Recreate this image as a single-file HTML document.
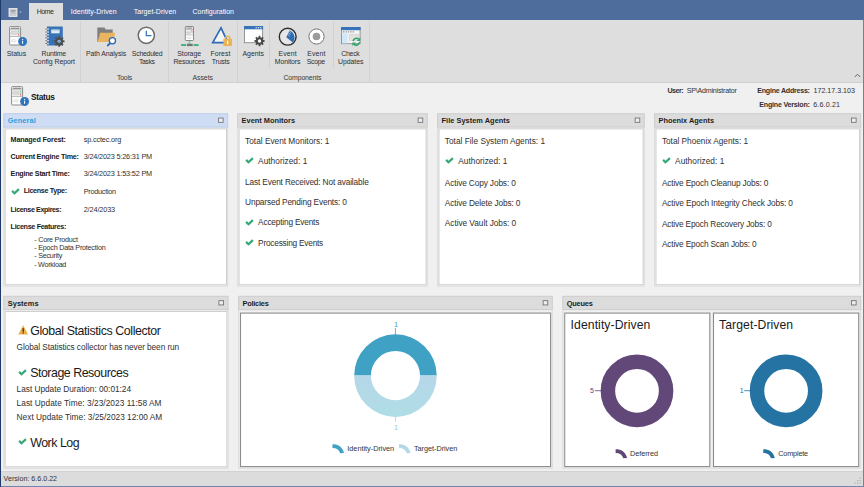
<!DOCTYPE html>
<html><head><meta charset="utf-8"><title>Status</title>
<style>
*{box-sizing:border-box;margin:0;padding:0}
html,body{width:864px;height:487px;overflow:hidden;background:#f0f0f0}
body{position:relative;font-family:"Liberation Sans",sans-serif;font-size:8px;color:#222}
.a{position:absolute}
.t{position:absolute;white-space:nowrap}
.sep{position:absolute;width:1px;background:#d1d1d1}
.ph{position:absolute;background:#dedede;border:1px solid #d3d3d3}
.ph.sel{background:#cedcf3;border-color:#c3d3ee}
.pf{position:absolute;background:#f0f0f0;border:1px solid #dadada;border-top:none}
.pb{position:absolute;background:#fff;border:1px solid #d0d0d0}
.pb.dk{border-color:#8e8e8e}
.mx{position:absolute;width:5.6px;height:5.3px;border:1px solid #72727a;background:#eef0f4}
</style></head><body>
<div class="a" style="left:0;top:0;width:864px;height:20px;background:#4e6d9d"></div>
<div class="a" style="left:1px;top:20px;width:863px;height:62px;background:#dedede"></div>
<div class="a" style="left:1px;top:82px;width:863px;height:1px;background:#d0d0d0"></div>
<div class="a" style="left:29px;top:3px;width:34px;height:18px;background:#dedede"></div>
<div class="a" style="left:1px;top:471px;width:863px;height:15px;background:#dcdcdc;border-top:1px solid #d2d2d2"></div>
<div class="a" style="left:0;top:486px;width:864px;height:1px;background:#6f87b0"></div>
<div class="a" style="left:0;top:0;width:1.3px;height:487px;background:#1d3a6b"></div>
<div class="a" style="left:862.800px;top:20px;width:1.200px;height:467px;background:#6583b1"></div>
<svg class="a" style="left:8px;top:8px" width="15" height="9" viewBox="0 0 15 9"><rect x="1" y="0.5" width="8" height="8" fill="#cfcfcf" stroke="#f2f2f2" stroke-width="0.8"/><rect x="2.800" y="2" width="4.600" height="1.600" fill="#8f98a8"/><rect x="2.800" y="4.500" width="4.600" height="0.800" fill="#aab"/><path d="M11.300 3.600h2.400l-1.200 1.500z" fill="#b9c6dc"/></svg>
<div class="t" style="left:36.70px;top:8.21px;font-size:7.0px;line-height:7px;letter-spacing:-0.524px;color:#2b2b2b;">Home</div>
<div class="t" style="left:70.80px;top:8.21px;font-size:7.0px;line-height:7px;letter-spacing:0.055px;color:#fff;">Identity-Driven</div>
<div class="t" style="left:133.80px;top:8.21px;font-size:7.0px;line-height:7px;letter-spacing:0.032px;color:#fff;">Target-Driven</div>
<div class="t" style="left:192.60px;top:8.21px;font-size:7.0px;line-height:7px;letter-spacing:-0.028px;color:#fff;">Configuration</div>
<div class="t" style="left:6.80px;top:49.87px;font-size:6.9px;line-height:7px;letter-spacing:-0.052px;color:#2e2e33;">Status</div>
<div class="t" style="left:41.60px;top:49.87px;font-size:6.9px;line-height:7px;letter-spacing:-0.182px;color:#2e2e33;">Runtime</div>
<div class="t" style="left:32.90px;top:57.87px;font-size:6.9px;line-height:7px;letter-spacing:-0.031px;color:#2e2e33;">Config Report</div>
<div class="t" style="left:86.00px;top:49.87px;font-size:6.9px;line-height:7px;letter-spacing:-0.102px;color:#2e2e33;">Path Analysis</div>
<div class="t" style="left:131.80px;top:49.87px;font-size:6.9px;line-height:7px;letter-spacing:-0.226px;color:#2e2e33;">Scheduled</div>
<div class="t" style="left:138.90px;top:57.87px;font-size:6.9px;line-height:7px;letter-spacing:-0.409px;color:#2e2e33;">Tasks</div>
<div class="t" style="left:177.30px;top:49.87px;font-size:6.9px;line-height:7px;letter-spacing:-0.078px;color:#2e2e33;">Storage</div>
<div class="t" style="left:173.50px;top:57.87px;font-size:6.9px;line-height:7px;letter-spacing:-0.185px;color:#2e2e33;">Resources</div>
<div class="t" style="left:210.50px;top:49.87px;font-size:6.9px;line-height:7px;letter-spacing:0.089px;color:#2e2e33;">Forest</div>
<div class="t" style="left:211.80px;top:57.87px;font-size:6.9px;line-height:7px;letter-spacing:-0.182px;color:#2e2e33;">Trusts</div>
<div class="t" style="left:242.50px;top:49.87px;font-size:6.9px;line-height:7px;letter-spacing:0.004px;color:#2e2e33;">Agents</div>
<div class="t" style="left:278.50px;top:49.87px;font-size:6.9px;line-height:7px;letter-spacing:0.164px;color:#2e2e33;">Event</div>
<div class="t" style="left:274.80px;top:57.87px;font-size:6.9px;line-height:7px;letter-spacing:-0.108px;color:#2e2e33;">Monitors</div>
<div class="t" style="left:307.30px;top:49.87px;font-size:6.9px;line-height:7px;letter-spacing:0.139px;color:#2e2e33;">Event</div>
<div class="t" style="left:306.80px;top:57.87px;font-size:6.9px;line-height:7px;letter-spacing:-0.341px;color:#2e2e33;">Scope</div>
<div class="t" style="left:341.30px;top:49.87px;font-size:6.9px;line-height:7px;letter-spacing:-0.264px;color:#2e2e33;">Check</div>
<div class="t" style="left:338.00px;top:57.87px;font-size:6.9px;line-height:7px;letter-spacing:-0.033px;color:#2e2e33;">Updates</div>
<div class="t" style="left:117.10px;top:73.77px;font-size:6.9px;line-height:7px;letter-spacing:-0.252px;color:#3a3a3a;">Tools</div>
<div class="t" style="left:192.50px;top:73.77px;font-size:6.9px;line-height:7px;letter-spacing:-0.041px;color:#3a3a3a;">Assets</div>
<div class="t" style="left:283.50px;top:73.77px;font-size:6.9px;line-height:7px;letter-spacing:-0.125px;color:#3a3a3a;">Components</div>
<div class="sep" style="left:80px;top:21px;height:61px"></div>
<div class="sep" style="left:168px;top:21px;height:61px"></div>
<div class="sep" style="left:237px;top:21px;height:61px"></div>
<div class="sep" style="left:369px;top:21px;height:61px"></div>
<div class="sep" style="left:269px;top:22px;height:46px"></div>
<div class="sep" style="left:333px;top:22px;height:46px"></div>
<svg class="a" style="left:854px;top:73px" width="7" height="5" viewBox="0 0 7 5"><path d="M0.800 4l2.700-2.800L6.200 4" fill="none" stroke="#666" stroke-width="1"/></svg>
<svg class="a" style="left:8.6px;top:25.6px" width="19" height="21" viewBox="0 0 19 21"><rect x="0.600" y="0.600" width="11" height="18.400" rx="0.800" fill="#fdfdfd" stroke="#8c8c8c" stroke-width="1"/><rect x="1.800" y="1.800" width="8.600" height="0.900" fill="#666"/><path d="M1 3.800h10.200M1 7.100h10.200M1 10.400h10.200" stroke="#a2a2a2" stroke-width="0.800"/><path d="M2 5.500h6.500M2 8.800h6.500" stroke="#cdcdcd" stroke-width="0.900"/><rect x="9.300" y="4.700" width="0.900" height="1.600" fill="#3cb878"/><rect x="9.300" y="8" width="0.900" height="1.600" fill="#e0412f"/><ellipse cx="4.800" cy="14.800" rx="2.600" ry="1" fill="none" stroke="#d8d8d8" stroke-width="0.800"/><circle cx="13.600" cy="15.500" r="4.450" fill="#2f74bd"/><rect x="13.100" y="14.700" width="1" height="3.100" fill="#fff"/><rect x="13.100" y="12.900" width="1" height="1.100" fill="#fff"/></svg>
<svg class="a" style="left:10.6px;top:85.6px" width="19" height="21" viewBox="0 0 19 21"><rect x="0.600" y="0.600" width="11" height="18.400" rx="0.800" fill="#fdfdfd" stroke="#8c8c8c" stroke-width="1"/><rect x="1.800" y="1.800" width="8.600" height="0.900" fill="#666"/><path d="M1 3.800h10.200M1 7.100h10.200M1 10.400h10.200" stroke="#a2a2a2" stroke-width="0.800"/><path d="M2 5.500h6.500M2 8.800h6.500" stroke="#cdcdcd" stroke-width="0.900"/><rect x="9.300" y="4.700" width="0.900" height="1.600" fill="#3cb878"/><rect x="9.300" y="8" width="0.900" height="1.600" fill="#e0412f"/><ellipse cx="4.800" cy="14.800" rx="2.600" ry="1" fill="none" stroke="#d8d8d8" stroke-width="0.800"/><circle cx="13.600" cy="15.500" r="4.450" fill="#2f74bd"/><rect x="13.100" y="14.700" width="1" height="3.100" fill="#fff"/><rect x="13.100" y="12.900" width="1" height="1.100" fill="#fff"/></svg>
<svg class="a" style="left:45.1px;top:26.1px" width="20" height="21" viewBox="0 0 20 21"><rect x="2" y="0.500" width="15.800" height="19" fill="#3873b8"/><rect x="0.300" y="2.6" width="3.200" height="1" rx="0.500" fill="#5a6a80"/><rect x="2.200" y="2.4" width="1.600" height="1.400" fill="#dfe9f5"/><rect x="0.300" y="5.5" width="3.200" height="1" rx="0.500" fill="#5a6a80"/><rect x="2.200" y="5.3" width="1.600" height="1.400" fill="#dfe9f5"/><rect x="0.300" y="8.4" width="3.200" height="1" rx="0.500" fill="#5a6a80"/><rect x="2.200" y="8.2" width="1.600" height="1.400" fill="#dfe9f5"/><rect x="0.300" y="11.3" width="3.200" height="1" rx="0.500" fill="#5a6a80"/><rect x="2.200" y="11.1" width="1.600" height="1.400" fill="#dfe9f5"/><rect x="0.300" y="14.2" width="3.200" height="1" rx="0.500" fill="#5a6a80"/><rect x="2.200" y="14.0" width="1.600" height="1.400" fill="#dfe9f5"/><rect x="0.300" y="17.1" width="3.200" height="1" rx="0.500" fill="#5a6a80"/><rect x="2.200" y="16.9" width="1.600" height="1.400" fill="#dfe9f5"/><rect x="6.200" y="3.500" width="8.400" height="3.800" fill="#e3edf8"/><rect x="6.800" y="4.100" width="7.200" height="1" fill="#bcd3ee"/><circle cx="14.100" cy="15.400" r="5.400" fill="#dedede" opacity="0"/><path d="M19.53 14.41L19.53 16.19L18.09 16.23L17.61 17.39L18.59 18.44L17.34 19.69L16.29 18.71L15.13 19.19L15.09 20.63L13.31 20.63L13.27 19.19L12.11 18.71L11.06 19.69L9.81 18.44L10.79 17.39L10.31 16.23L8.87 16.19L8.87 14.41L10.31 14.37L10.79 13.21L9.81 12.16L11.06 10.91L12.11 11.89L13.27 11.41L13.31 9.97L15.09 9.97L15.13 11.41L16.29 11.89L17.34 10.91L18.59 12.16L17.61 13.21L18.09 14.37z" fill="#4f4f4f"/><circle cx="14.2" cy="15.3" r="1.73" fill="#3873b8"/><circle cx="14.100" cy="15.300" r="1.400" fill="#cfd8e6"/><circle cx="14.100" cy="15.300" r="0.800" fill="#3873b8"/></svg>
<svg class="a" style="left:97px;top:27px" width="20" height="20" viewBox="0 0 20 20"><path d="M0.300 0.500h7.200l1.200 2h7v12.300H0.300z" fill="#7f7f7f"/><path d="M3.200 5.700h15l-2 9.300H0.600z" fill="#e9b561"/><path d="M14 15.500l-3.300 3" stroke="#2c69b3" stroke-width="1.700" stroke-linecap="round"/><circle cx="15.400" cy="13.800" r="3.100" fill="#fff" stroke="#2c69b3" stroke-width="1.300"/></svg>
<svg class="a" style="left:136.9px;top:26.4px" width="19" height="19" viewBox="0 0 19 19"><circle cx="9.300" cy="9.300" r="8.100" fill="#fff" stroke="#6b6b6b" stroke-width="1.500"/><path d="M9.300 4.700v5h5.200" fill="none" stroke="#3b79c1" stroke-width="1.300"/></svg>
<svg class="a" style="left:180px;top:25.6px" width="20" height="21" viewBox="0 0 20 21"><rect x="5.300" y="0.500" width="8.200" height="14" rx="0.600" fill="#fdfdfd" stroke="#8a8a8a" stroke-width="1"/><rect x="6.400" y="1.600" width="6" height="0.900" fill="#666"/><path d="M5.800 3.500h7.200M5.800 6.200h7.200M5.800 8.800h7.200" stroke="#a8a8a8" stroke-width="0.700"/><rect x="11.400" y="4.200" width="1" height="1.400" fill="#e36a55"/><path d="M6.600 5h4M6.600 7.500h4" stroke="#d0d0d0" stroke-width="0.800"/><ellipse cx="9.400" cy="11.800" rx="2" ry="0.800" fill="none" stroke="#d8d8d8" stroke-width="0.700"/><rect x="8.600" y="15" width="1.700" height="3" fill="#7ccfa6"/><rect x="1.100" y="18.100" width="5" height="1.900" fill="#3cb37a"/><rect x="6.900" y="17.800" width="5.800" height="2.300" fill="#747474"/><rect x="13.600" y="18.100" width="5" height="1.900" fill="#3cb37a"/></svg>
<svg class="a" style="left:211px;top:25.6px" width="22" height="21" viewBox="0 0 22 21"><path d="M10 1.800L1.700 16.600H17z" fill="#f4f4f4" stroke="#2d6cb4" stroke-width="1.700" stroke-linejoin="miter"/><path d="M14.400 13v-0.600a2.300 2.300 0 0 1 4.600 0V13" fill="none" stroke="#e9b255" stroke-width="1.300"/><rect x="12.300" y="12.700" width="8.600" height="7.400" rx="0.700" fill="#e9b255"/><rect x="16" y="14.600" width="1.200" height="3.600" rx="0.500" fill="#fff"/></svg>
<svg class="a" style="left:243.6px;top:26.4px" width="21" height="21" viewBox="0 0 21 21"><rect x="0.500" y="0.500" width="18.100" height="16.200" fill="#fff" stroke="#8a8a8a" stroke-width="0.900"/><rect x="0" y="0" width="19.100" height="3.300" fill="#3773ba"/><rect x="11.600" y="1.200" width="1.200" height="1.100" fill="#fff"/><rect x="13.900" y="1.200" width="1.200" height="1.100" fill="#fff"/><rect x="16.200" y="1.200" width="1.200" height="1.100" fill="#fff"/><path d="M20.63 14.15L20.63 15.85L19.24 15.90L18.78 17.01L19.73 18.02L18.52 19.23L17.51 18.28L16.40 18.74L16.35 20.13L14.65 20.13L14.60 18.74L13.49 18.28L12.48 19.23L11.27 18.02L12.22 17.01L11.76 15.90L10.37 15.85L10.37 14.15L11.76 14.10L12.22 12.99L11.27 11.98L12.48 10.77L13.49 11.72L14.60 11.26L14.65 9.87L16.35 9.87L16.40 11.26L17.51 11.72L18.52 10.77L19.73 11.98L18.78 12.99L19.24 14.10z" fill="#484848"/><circle cx="15.5" cy="15" r="1.66" fill="#fff"/></svg>
<svg class="a" style="left:278.4px;top:26.6px" width="20" height="20" viewBox="0 0 20 20"><circle cx="9.700" cy="9.700" r="8.400" fill="#e6e6e6" stroke="#2b2b2b" stroke-width="1.400"/><path d="M8.300 10.200L11.600 3.300A8 8 0 0 1 14.800 15.600z" fill="#2f6db3"/><path d="M10.800 3.800l2.500 2M10 5.500l2.500 2M9.300 7.200l2.400 2" stroke="#e6e6e6" stroke-width="0.600"/></svg>
<svg class="a" style="left:308.2px;top:27.9px" width="17" height="17" viewBox="0 0 17 17"><circle cx="8.500" cy="8.500" r="7.600" fill="#fff" stroke="#777" stroke-width="1"/><circle cx="8.500" cy="8.500" r="3.800" fill="#9b9b9b"/></svg>
<svg class="a" style="left:341px;top:26.9px" width="21" height="21" viewBox="0 0 21 21"><rect x="0.500" y="0.500" width="18.600" height="16.200" fill="#f3f3f3" stroke="#8f8f8f" stroke-width="0.900"/><rect x="0" y="0" width="19.600" height="3.200" fill="#3773ba"/><rect x="1" y="6.400" width="5.600" height="9.900" fill="#cfe9fa"/><rect x="2" y="4.400" width="1.300" height="1" fill="#777"/><rect x="4.400" y="4.400" width="1.300" height="1" fill="#777"/><rect x="6.800" y="4.400" width="1.300" height="1" fill="#777"/><rect x="9.200" y="4.400" width="1.300" height="1" fill="#777"/><rect x="11.600" y="4.400" width="1.300" height="1" fill="#777"/><rect x="8.500" y="7.300" width="9" height="6" fill="#e2e2e2" stroke="#cfcfcf" stroke-width="0.600"/><path d="M12.100 14.200a3.300 3.300 0 0 1 5.600-1.900" fill="none" stroke="#2fa86d" stroke-width="1.600"/><path d="M19.300 10.300v3.600h-3.600z" fill="#2fa86d"/><path d="M18.600 15.200a3.300 3.300 0 0 1-5.600 1.900" fill="none" stroke="#2fa86d" stroke-width="1.600"/><path d="M11.400 19.100v-3.600h3.600z" fill="#2fa86d"/></svg>
<div class="t" style="left:31.00px;top:91.57px;font-size:8.3px;line-height:10px;letter-spacing:-0.313px;color:#141414;font-weight:bold;">Status</div>
<div class="t" style="left:667.50px;top:87.04px;font-size:7.1px;line-height:8px;letter-spacing:-0.513px;color:#303030;font-weight:bold;">User:</div>
<div class="t" style="left:686.80px;top:87.04px;font-size:7.1px;line-height:8px;letter-spacing:-0.218px;color:#303030;">SP\Administrator</div>
<div class="t" style="left:757.30px;top:87.04px;font-size:7.1px;line-height:8px;letter-spacing:-0.247px;color:#303030;font-weight:bold;">Engine Address:</div>
<div class="t" style="left:813.50px;top:87.04px;font-size:7.1px;line-height:8px;letter-spacing:0.004px;color:#303030;">172.17.3.103</div>
<div class="t" style="left:759.30px;top:101.04px;font-size:7.1px;line-height:8px;letter-spacing:-0.211px;color:#303030;font-weight:bold;">Engine Version:</div>
<div class="t" style="left:813.20px;top:101.04px;font-size:7.1px;line-height:8px;letter-spacing:0.163px;color:#303030;">6.6.0.21</div>
<svg class="a" style="left:0;top:0" width="864" height="487" viewBox="0 0 864 487"><rect x="3.80" y="127.00" width="223.90" height="159.20" fill="#f1f1f1" stroke="#dcdcdc" stroke-width="1"/><rect x="3.80" y="113.70" width="223.90" height="13.30" fill="#cfddf4" stroke="#bccdea" stroke-width="1"/><rect x="5.20" y="128.90" width="221.30" height="155.80" fill="#fff" stroke="#cfcfcf" stroke-width="1"/><rect x="218.55" y="118.05" width="4.60" height="4.30" fill="#eceef2" stroke="#74747c" stroke-width="0.9"/></svg>
<div class="t" style="left:7.70px;top:116.35px;font-size:7.4px;line-height:9px;letter-spacing:0.090px;color:#2ba2dc;font-weight:bold;">General</div>
<div class="t" style="left:10.60px;top:134.88px;font-size:7.2px;line-height:9px;letter-spacing:-0.151px;color:#1a1a1a;font-weight:bold;">Managed Forest:</div>
<div class="t" style="left:83.70px;top:135.11px;font-size:7.3px;line-height:9px;letter-spacing:-0.160px;color:#303030;">sp.cctec.org</div>
<div class="t" style="left:10.60px;top:151.88px;font-size:7.2px;line-height:9px;letter-spacing:-0.241px;color:#1a1a1a;font-weight:bold;">Current Engine Time:</div>
<div class="t" style="left:83.70px;top:152.11px;font-size:7.3px;line-height:9px;letter-spacing:-0.176px;color:#303030;">3/24/2023 5:26:31 PM</div>
<div class="t" style="left:10.60px;top:169.08px;font-size:7.2px;line-height:9px;letter-spacing:-0.240px;color:#1a1a1a;font-weight:bold;">Engine Start Time:</div>
<div class="t" style="left:83.70px;top:169.31px;font-size:7.3px;line-height:9px;letter-spacing:-0.176px;color:#303030;">3/24/2023 1:53:52 PM</div>
<svg class="a" style="left:10.8px;top:187.5px" width="9" height="7" viewBox="0 0 9 7"><path d="M1.100 2.900l2.400 2.300L7.900 1.100" fill="none" stroke="#35a878" stroke-width="2.200"/></svg>
<div class="t" style="left:23.70px;top:186.18px;font-size:7.2px;line-height:9px;letter-spacing:-0.332px;color:#1a1a1a;font-weight:bold;">License Type:</div>
<div class="t" style="left:83.70px;top:186.91px;font-size:7.3px;line-height:9px;letter-spacing:-0.278px;color:#303030;">Production</div>
<div class="t" style="left:10.60px;top:204.88px;font-size:7.2px;line-height:9px;letter-spacing:-0.409px;color:#1a1a1a;font-weight:bold;">License Expires:</div>
<div class="t" style="left:83.70px;top:205.11px;font-size:7.3px;line-height:9px;letter-spacing:-0.122px;color:#303030;">2/24/2033</div>
<div class="t" style="left:10.60px;top:222.48px;font-size:7.2px;line-height:9px;letter-spacing:-0.339px;color:#1a1a1a;font-weight:bold;">License Features:</div>
<div class="t" style="left:34.30px;top:234.98px;font-size:7.2px;line-height:9px;letter-spacing:-0.240px;color:#303030;">- Core Product</div>
<div class="t" style="left:34.30px;top:243.28px;font-size:7.2px;line-height:9px;letter-spacing:-0.225px;color:#303030;">- Epoch Data Protection</div>
<div class="t" style="left:34.30px;top:250.98px;font-size:7.2px;line-height:9px;letter-spacing:-0.245px;color:#303030;">- Security</div>
<div class="t" style="left:34.30px;top:259.88px;font-size:7.2px;line-height:9px;letter-spacing:-0.286px;color:#303030;">- Workload</div>
<svg class="a" style="left:0;top:0" width="864" height="487" viewBox="0 0 864 487"><rect x="237.70" y="127.00" width="189.60" height="159.20" fill="#f1f1f1" stroke="#dcdcdc" stroke-width="1"/><rect x="237.70" y="113.70" width="189.60" height="13.30" fill="#dcdcdc" stroke="#cecece" stroke-width="1"/><rect x="239.10" y="128.90" width="187.00" height="155.80" fill="#fff" stroke="#cfcfcf" stroke-width="1"/><rect x="418.15" y="118.05" width="4.60" height="4.30" fill="#eceef2" stroke="#74747c" stroke-width="0.9"/></svg>
<div class="t" style="left:241.60px;top:116.35px;font-size:7.4px;line-height:9px;letter-spacing:0.004px;color:#1c1c1c;font-weight:bold;">Event Monitors</div>
<div class="t" style="left:245.10px;top:135.57px;font-size:8.3px;line-height:10px;letter-spacing:-0.006px;color:#303030;">Total Event Monitors: 1</div>
<svg class="a" style="left:245.3px;top:157.3px" width="9" height="7" viewBox="0 0 9 7"><path d="M1.100 2.900l2.400 2.300L7.900 1.100" fill="none" stroke="#35a878" stroke-width="2.200"/></svg>
<div class="t" style="left:258.10px;top:155.87px;font-size:8.3px;line-height:10px;letter-spacing:0.024px;color:#303030;">Authorized: 1</div>
<div class="t" style="left:245.10px;top:176.87px;font-size:8.3px;line-height:10px;letter-spacing:-0.152px;color:#303030;">Last Event Received: Not available</div>
<div class="t" style="left:245.10px;top:197.17px;font-size:8.3px;line-height:10px;letter-spacing:-0.151px;color:#303030;">Unparsed Pending Events: 0</div>
<svg class="a" style="left:245.3px;top:218.9px" width="9" height="7" viewBox="0 0 9 7"><path d="M1.100 2.900l2.400 2.300L7.900 1.100" fill="none" stroke="#35a878" stroke-width="2.200"/></svg>
<div class="t" style="left:258.10px;top:217.47px;font-size:8.3px;line-height:10px;letter-spacing:-0.189px;color:#303030;">Accepting Events</div>
<svg class="a" style="left:245.3px;top:239.2px" width="9" height="7" viewBox="0 0 9 7"><path d="M1.100 2.900l2.400 2.300L7.900 1.100" fill="none" stroke="#35a878" stroke-width="2.200"/></svg>
<div class="t" style="left:258.10px;top:237.77px;font-size:8.3px;line-height:10px;letter-spacing:-0.221px;color:#303030;">Processing Events</div>
<svg class="a" style="left:0;top:0" width="864" height="487" viewBox="0 0 864 487"><rect x="437.60" y="127.00" width="206.70" height="159.20" fill="#f1f1f1" stroke="#dcdcdc" stroke-width="1"/><rect x="437.60" y="113.70" width="206.70" height="13.30" fill="#dcdcdc" stroke="#cecece" stroke-width="1"/><rect x="439.00" y="128.90" width="204.10" height="155.80" fill="#fff" stroke="#cfcfcf" stroke-width="1"/><rect x="635.15" y="118.05" width="4.60" height="4.30" fill="#eceef2" stroke="#74747c" stroke-width="0.9"/></svg>
<div class="t" style="left:441.50px;top:116.35px;font-size:7.4px;line-height:9px;letter-spacing:0.030px;color:#1c1c1c;font-weight:bold;">File System Agents</div>
<div class="t" style="left:444.80px;top:135.57px;font-size:8.3px;line-height:10px;letter-spacing:0.007px;color:#303030;">Total File System Agents: 1</div>
<svg class="a" style="left:445.3px;top:157.3px" width="9" height="7" viewBox="0 0 9 7"><path d="M1.100 2.900l2.400 2.300L7.900 1.100" fill="none" stroke="#35a878" stroke-width="2.200"/></svg>
<div class="t" style="left:458.30px;top:155.87px;font-size:8.3px;line-height:10px;letter-spacing:0.008px;color:#303030;">Authorized: 1</div>
<div class="t" style="left:444.80px;top:177.67px;font-size:8.3px;line-height:10px;letter-spacing:-0.125px;color:#303030;">Active Copy Jobs: 0</div>
<div class="t" style="left:444.80px;top:197.97px;font-size:8.3px;line-height:10px;letter-spacing:-0.113px;color:#303030;">Active Delete Jobs: 0</div>
<div class="t" style="left:444.80px;top:218.27px;font-size:8.3px;line-height:10px;letter-spacing:-0.046px;color:#303030;">Active Vault Jobs: 0</div>
<svg class="a" style="left:0;top:0" width="864" height="487" viewBox="0 0 864 487"><rect x="654.60" y="127.00" width="206.10" height="159.20" fill="#f1f1f1" stroke="#dcdcdc" stroke-width="1"/><rect x="654.60" y="113.70" width="206.10" height="13.30" fill="#dcdcdc" stroke="#cecece" stroke-width="1"/><rect x="656.00" y="128.90" width="203.50" height="155.80" fill="#fff" stroke="#cfcfcf" stroke-width="1"/><rect x="851.55" y="118.05" width="4.60" height="4.30" fill="#eceef2" stroke="#74747c" stroke-width="0.9"/></svg>
<div class="t" style="left:658.50px;top:116.35px;font-size:7.4px;line-height:9px;letter-spacing:-0.003px;color:#1c1c1c;font-weight:bold;">Phoenix Agents</div>
<div class="t" style="left:661.90px;top:135.57px;font-size:8.3px;line-height:10px;letter-spacing:-0.025px;color:#303030;">Total Phoenix Agents: 1</div>
<svg class="a" style="left:662.4px;top:157.3px" width="9" height="7" viewBox="0 0 9 7"><path d="M1.100 2.900l2.400 2.300L7.900 1.100" fill="none" stroke="#35a878" stroke-width="2.200"/></svg>
<div class="t" style="left:675.10px;top:155.87px;font-size:8.3px;line-height:10px;letter-spacing:0.024px;color:#303030;">Authorized: 1</div>
<div class="t" style="left:661.90px;top:178.07px;font-size:8.3px;line-height:10px;letter-spacing:-0.157px;color:#303030;">Active Epoch Cleanup Jobs: 0</div>
<div class="t" style="left:661.90px;top:198.37px;font-size:8.3px;line-height:10px;letter-spacing:-0.116px;color:#303030;">Active Epoch Integrity Check Jobs: 0</div>
<div class="t" style="left:661.90px;top:218.67px;font-size:8.3px;line-height:10px;letter-spacing:-0.174px;color:#303030;">Active Epoch Recovery Jobs: 0</div>
<div class="t" style="left:661.90px;top:238.97px;font-size:8.3px;line-height:10px;letter-spacing:-0.164px;color:#303030;">Active Epoch Scan Jobs: 0</div>
<svg class="a" style="left:0;top:0" width="864" height="487" viewBox="0 0 864 487"><rect x="3.80" y="309.60" width="224.30" height="158.70" fill="#f1f1f1" stroke="#dcdcdc" stroke-width="1"/><rect x="3.80" y="296.30" width="224.30" height="13.30" fill="#dcdcdc" stroke="#cecece" stroke-width="1"/><rect x="5.20" y="311.50" width="221.70" height="155.30" fill="#fff" stroke="#cfcfcf" stroke-width="1"/><rect x="218.95" y="300.65" width="4.60" height="4.30" fill="#eceef2" stroke="#74747c" stroke-width="0.9"/></svg>
<div class="t" style="left:7.70px;top:298.95px;font-size:7.4px;line-height:9px;letter-spacing:0.076px;color:#1c1c1c;font-weight:bold;">Systems</div>
<svg class="a" style="left:17.600px;top:325.200px" width="10.400" height="10" viewBox="0 0 10 10" preserveAspectRatio="none"><path d="M5 0.300L9.800 9.600H0.200z" fill="#efb04c"/><rect x="4.400" y="3.200" width="1.200" height="3.600" fill="#3a2a10"/><rect x="4.400" y="7.400" width="1.200" height="1.200" fill="#3a2a10"/></svg>
<div class="t" style="left:30.20px;top:324.34px;font-size:12.4px;line-height:14px;letter-spacing:-0.399px;color:#1a1a1a;">Global Statistics Collector</div>
<div class="t" style="left:16.60px;top:342.07px;font-size:8.3px;line-height:10px;letter-spacing:-0.086px;color:#303030;">Global Statistics collector has never been run</div>
<svg class="a" style="left:18.3px;top:368.6px" width="9" height="7" viewBox="0 0 9 7"><path d="M1.100 2.900l2.400 2.300L7.900 1.100" fill="none" stroke="#35a878" stroke-width="2.200"/></svg>
<div class="t" style="left:30.20px;top:366.04px;font-size:12.4px;line-height:14px;letter-spacing:-0.478px;color:#1a1a1a;">Storage Resources</div>
<div class="t" style="left:16.60px;top:383.77px;font-size:8.3px;line-height:10px;letter-spacing:-0.030px;color:#303030;">Last Update Duration: 00:01:24</div>
<div class="t" style="left:16.60px;top:397.87px;font-size:8.3px;line-height:10px;letter-spacing:0.044px;color:#303030;">Last Update Time: 3/23/2023 11:58 AM</div>
<div class="t" style="left:16.60px;top:412.07px;font-size:8.3px;line-height:10px;letter-spacing:0.010px;color:#303030;">Next Update Time: 3/25/2023 12:00 AM</div>
<svg class="a" style="left:18.3px;top:437.8px" width="9" height="7" viewBox="0 0 9 7"><path d="M1.100 2.900l2.400 2.300L7.900 1.100" fill="none" stroke="#35a878" stroke-width="2.200"/></svg>
<div class="t" style="left:30.20px;top:435.64px;font-size:12.4px;line-height:14px;letter-spacing:-0.477px;color:#1a1a1a;">Work Log</div>
<svg class="a" style="left:0;top:0" width="864" height="487" viewBox="0 0 864 487"><rect x="238.60" y="309.60" width="313.70" height="158.70" fill="#f1f1f1" stroke="#dcdcdc" stroke-width="1"/><rect x="238.60" y="296.30" width="313.70" height="13.30" fill="#dcdcdc" stroke="#cecece" stroke-width="1"/><rect x="543.15" y="300.65" width="4.60" height="4.30" fill="#eceef2" stroke="#74747c" stroke-width="0.9"/></svg>
<div class="t" style="left:242.50px;top:298.95px;font-size:7.4px;line-height:9px;letter-spacing:-0.239px;color:#1c1c1c;font-weight:bold;">Policies</div>
<svg class="a" style="left:0;top:0" width="864" height="487" viewBox="0 0 864 487"><rect x="239.80" y="312.40" width="311.50" height="154.90" fill="none" stroke="#e2e2e2" stroke-width="0.6"/><rect x="240.53" y="313.12" width="310.05" height="153.45" fill="#fff" stroke="#8c8c8c" stroke-width="1.05"/></svg>
<svg class="a" style="left:0;top:0" width="864" height="487" viewBox="0 0 864 487">
<path d="M354.15 375.6a41.3 41.3 0 0 1 82.6 0h-16.699999999999996a24.6 24.6 0 0 0 -49.2 0z" fill="#3fa2c4"/>
<path d="M354.15 375.6a41.3 41.3 0 0 0 82.6 0h-16.699999999999996a24.6 24.6 0 0 1 -49.2 0z" fill="url(#g2)"/>
<defs><linearGradient id="g2" x1="0" y1="0" x2="0" y2="1"><stop offset="0" stop-color="#b6d7e8"/><stop offset="1" stop-color="#afdde6"/></linearGradient></defs>
<path d="M395.45 327.900V334.8" stroke="#3fa2c4" stroke-width="0.800"/><path d="M395.45 416.40000000000003V421.800" stroke="#a9d3e3" stroke-width="0.800"/>
<path d="M332.5 444.2c5.500 0 10 2.500 11.500 8.700l-3.800 0.300c-1-3.600-3.700-5.300-7.700-5.300z" fill="#3fa2c4"/>
<path d="M399 444.2c5.500 0 10 2.500 11.500 8.700l-3.800 0.300c-1-3.600-3.700-5.300-7.700-5.300z" fill="#b3d8e7"/>
</svg>
<div class="t" style="left:394.10px;top:319.75px;font-size:7.4px;line-height:9px;letter-spacing:0.000px;color:#3fa2c4;">1</div>
<div class="t" style="left:394.10px;top:423.35px;font-size:7.4px;line-height:9px;letter-spacing:0.000px;color:#9ccbdc;">1</div>
<div class="t" style="left:347.30px;top:444.21px;font-size:7.3px;line-height:9px;letter-spacing:-0.012px;color:#333;">Identity-Driven</div>
<div class="t" style="left:414.00px;top:444.21px;font-size:7.3px;line-height:9px;letter-spacing:-0.043px;color:#333;">Target-Driven</div>
<svg class="a" style="left:0;top:0" width="864" height="487" viewBox="0 0 864 487"><rect x="562.80" y="309.60" width="297.90" height="158.70" fill="#f1f1f1" stroke="#dcdcdc" stroke-width="1"/><rect x="562.80" y="296.30" width="297.90" height="13.30" fill="#dcdcdc" stroke="#cecece" stroke-width="1"/><rect x="851.55" y="300.65" width="4.60" height="4.30" fill="#eceef2" stroke="#74747c" stroke-width="0.9"/></svg>
<div class="t" style="left:566.70px;top:298.95px;font-size:7.4px;line-height:9px;letter-spacing:-0.189px;color:#1c1c1c;font-weight:bold;">Queues</div>
<svg class="a" style="left:0;top:0" width="864" height="487" viewBox="0 0 864 487"><rect x="564.00" y="312.40" width="146.50" height="154.90" fill="none" stroke="#e2e2e2" stroke-width="0.6"/><rect x="564.73" y="313.12" width="145.05" height="153.45" fill="#fff" stroke="#8c8c8c" stroke-width="1.05"/></svg>
<svg class="a" style="left:0;top:0" width="864" height="487" viewBox="0 0 864 487"><rect x="712.80" y="312.40" width="146.60" height="154.90" fill="none" stroke="#e2e2e2" stroke-width="0.6"/><rect x="713.52" y="313.12" width="145.15" height="153.45" fill="#fff" stroke="#8c8c8c" stroke-width="1.05"/></svg>
<div class="t" style="left:570.60px;top:318.17px;font-size:12.2px;line-height:14px;letter-spacing:0.082px;color:#1a1a1a;">Identity-Driven</div>
<div class="t" style="left:719.10px;top:318.17px;font-size:12.2px;line-height:14px;letter-spacing:0.073px;color:#1a1a1a;">Target-Driven</div>
<svg class="a" style="left:0;top:0" width="864" height="487" viewBox="0 0 864 487">
<circle cx="637.0" cy="390.900" r="29.100" fill="none" stroke="#614878" stroke-width="14.500"/>
<path d="M595.0 390.700H601.0" stroke="#614878" stroke-width="0.800"/>
<circle cx="786.1" cy="390.900" r="29.100" fill="none" stroke="#2473a2" stroke-width="14.500"/>
<path d="M744.2 390.700H750.1" stroke="#2473a2" stroke-width="0.800"/>
<path d="M615.6 449.2c5.500 0 10 2.500 11.500 8.700l-3.800 0.300c-1-3.600-3.700-5.300-7.700-5.300z" fill="#614878"/>
<path d="M763.3 449.2c5.500 0 10 2.500 11.500 8.700l-3.800 0.300c-1-3.600-3.700-5.300-7.700-5.300z" fill="#2473a2"/>
</svg>
<div class="t" style="left:589.90px;top:387.21px;font-size:7.0px;line-height:7px;letter-spacing:0.000px;color:#614878;">5</div>
<div class="t" style="left:739.80px;top:387.21px;font-size:7.0px;line-height:7px;letter-spacing:0.000px;color:#2473a2;">1</div>
<div class="t" style="left:630.10px;top:449.21px;font-size:7.3px;line-height:9px;letter-spacing:-0.072px;color:#333;">Deferred</div>
<div class="t" style="left:778.20px;top:449.21px;font-size:7.3px;line-height:9px;letter-spacing:-0.178px;color:#333;">Complete</div>
<div class="t" style="left:3.60px;top:474.94px;font-size:7.1px;line-height:8px;letter-spacing:0.013px;color:#333;">Version: 6.6.0.22</div>
<svg class="a" style="left:853px;top:476px" width="9" height="9" viewBox="0 0 9 9"><g fill="#b5b5b5"><rect x="6.500" y="1.500" width="1.300" height="1.300"/><rect x="4" y="4" width="1.300" height="1.300"/><rect x="6.500" y="4" width="1.300" height="1.300"/><rect x="1.500" y="6.500" width="1.300" height="1.300"/><rect x="4" y="6.500" width="1.300" height="1.300"/><rect x="6.500" y="6.500" width="1.300" height="1.300"/></g></svg>
</body></html>
